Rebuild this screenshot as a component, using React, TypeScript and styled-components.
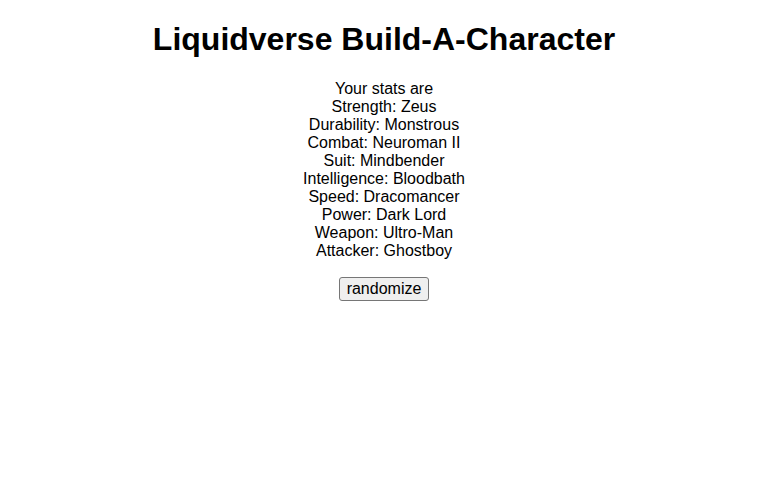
import React, { useState } from 'react';
import styled, { createGlobalStyle } from 'styled-components';

const GlobalStyle = createGlobalStyle`
  body {
    margin: 8px;
    background: #ffffff;
    color: #000000;
    font-family: "Liberation Sans", Arial, sans-serif;
  }
`;

type Stat = { label: string; value: string };

const initialStats: Stat[] = [
  { label: 'Strength', value: 'Zeus' },
  { label: 'Durability', value: 'Monstrous' },
  { label: 'Combat', value: 'Neuroman II' },
  { label: 'Suit', value: 'Mindbender' },
  { label: 'Intelligence', value: 'Bloodbath' },
  { label: 'Speed', value: 'Dracomancer' },
  { label: 'Power', value: 'Dark Lord' },
  { label: 'Weapon', value: 'Ultro-Man' },
  { label: 'Attacker', value: 'Ghostboy' },
];

const heroes = [
  'Zeus', 'Monstrous', 'Neuroman II', 'Mindbender', 'Bloodbath',
  'Dracomancer', 'Dark Lord', 'Ultro-Man', 'Ghostboy',
];

const App: React.FC = () => {
  const [stats, setStats] = useState<Stat[]>(initialStats);

  const randomize = () => {
    setStats(stats.map((s) => ({
      ...s,
      value: heroes[Math.floor(Math.random() * heroes.length)],
    })));
  };

  return (
    <>
      <GlobalStyle />
      <StyledPage>
        <Title>Liquidverse Build-A-Character</Title>
        <StatList>
          <div>Your stats are</div>
          {stats.map((s) => (
            <div key={s.label}>{s.label}: {s.value}</div>
          ))}
        </StatList>
        <RandomButton onClick={randomize}>randomize</RandomButton>
      </StyledPage>
    </>
  );
};

const StyledPage = styled.div`
  display: flex;
  flex-direction: column;
  align-items: center;
  text-align: center;
`;

const Title = styled.h1`
  font-size: 32px;
  font-weight: bold;
  margin: 13px 0 22px;
  line-height: 37px;
`;

const StatList = styled.div`
  font-size: 16px;
  line-height: 18px;
  margin-bottom: 17px;
`;

const RandomButton = styled.button`
  font-family: "Liberation Sans", Arial, sans-serif;
  font-size: 16px;
  line-height: 18px;
  padding: 2px 7px;
  color: #000000;
  background: #efefef;
  border: 1px solid #767676;
  border-radius: 3px;
  cursor: pointer;
`;

export default App;
